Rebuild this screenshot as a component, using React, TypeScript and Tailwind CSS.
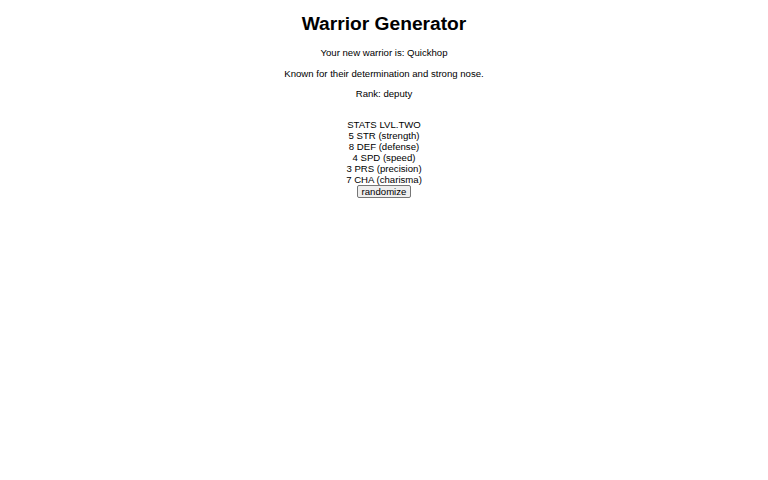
export default function App() {
  const stats = [
    "5 STR (strength)",
    "8 DEF (defense)",
    "4 SPD (speed)",
    "3 PRS (precision)",
    "7 CHA (charisma)",
  ];
  return (
    <div className="min-h-[480px] w-full bg-white text-black text-center text-[9.6px] leading-[11px] font-['Liberation_Sans',Arial,sans-serif]">
      <div className="pt-[13px]">
        <h1 className="text-[19.2px] leading-[22px] font-bold">Warrior Generator</h1>
        <p className="mt-[12px]">Your new warrior is: Quickhop</p>
        <p className="mt-[9.6px]">Known for their determination and strong nose.</p>
        <p className="mt-[9.6px]">Rank: deputy</p>
        <div className="mt-[20px] flex flex-col items-center">
          <div>STATS LVL.TWO</div>
          {stats.map((s) => (
            <div key={s}>{s}</div>
          ))}
          <button className="h-[13px] px-[4px] border border-[#767676] bg-[#efefef] rounded-[2px] text-[9.6px] leading-[11px]">
            randomize
          </button>
        </div>
      </div>
    </div>
  );
}
